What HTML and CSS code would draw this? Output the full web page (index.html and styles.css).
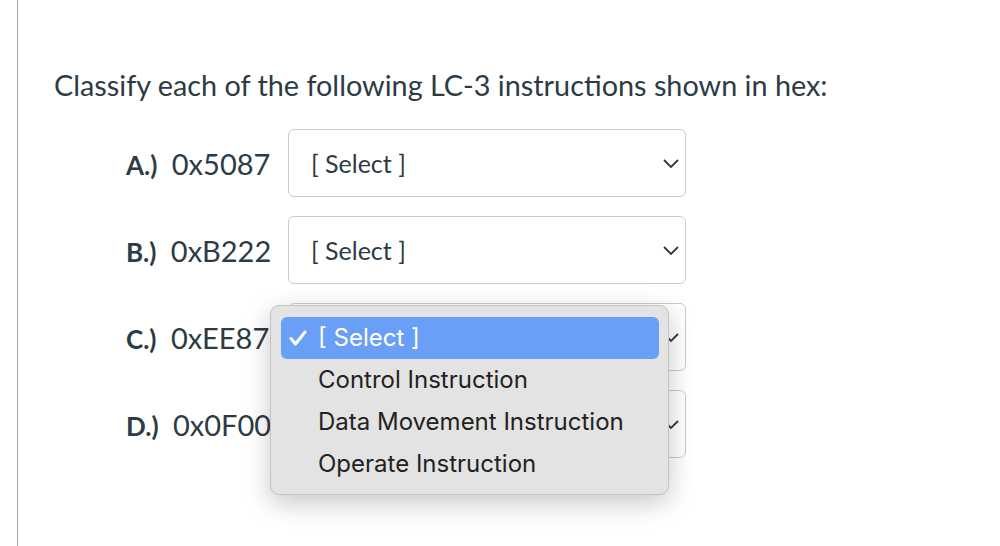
FILE: index.html
```html
<!DOCTYPE html>
<html lang="en">
<head>
  <meta charset="UTF-8">
  <title>Quiz Question</title>
  <link rel="stylesheet" href="styles.css">
</head>
<body>
  <div class="question">
    <p class="question-text">Classify each of the following LC-3 instructions shown in hex:</p>

    <div class="answers">
      <div class="answer-row">
        <span class="answer-label"><b>A.)</b> 0x5087</span>
        <div class="select-box"><span>[ Select ]</span><svg class="chevron" viewBox="0 0 16 9"><path d="M1 1l7 7 7-7"/></svg></div>
      </div>
      <div class="answer-row">
        <span class="answer-label"><b>B.)</b> 0xB222</span>
        <div class="select-box"><span>[ Select ]</span><svg class="chevron" viewBox="0 0 16 9"><path d="M1 1l7 7 7-7"/></svg></div>
      </div>
      <div class="answer-row">
        <span class="answer-label"><b>C.)</b> 0xEE87</span>
        <div class="select-box open"><span>[ Select ]</span><svg class="chevron" viewBox="0 0 16 9"><path d="M1 1l7 7 7-7"/></svg></div>
      </div>
      <div class="answer-row">
        <span class="answer-label"><b>D.)</b> 0x0F00</span>
        <div class="select-box open"><span>[ Select ]</span><svg class="chevron" viewBox="0 0 16 9"><path d="M1 1l7 7 7-7"/></svg></div>
      </div>
    </div>

    <!-- Open native dropdown for C -->
    <ul class="dropdown-menu">
      <li class="selected"><svg class="check" viewBox="0 0 18 16"><path d="M2 8.5l4.5 5.5L16 2"/></svg>[ Select ]</li>
      <li>Control Instruction</li>
      <li>Data Movement Instruction</li>
      <li>Operate Instruction</li>
    </ul>
  </div>
</body>
</html>
```

FILE: styles.css
```css
body {
  margin: 0;
  background: #fff;
  font-family: Lato, "Noto Sans", sans-serif;
  color: #2d3b45;
}

.question {
  position: relative;
  margin-left: 17px;
  height: 546px;
  border-left: 1px solid #a5a5a5;
  padding: 0 0 0 36px;
}

.question-text {
  margin: 0;
  padding-top: 67px;
  font-size: 28.8px;
  line-height: 36px;
}

.answers {
  display: flex;
  flex-direction: column;
  gap: 19px;
  margin-top: 26px;
  padding-left: 72px;
}

.answer-row {
  display: flex;
  align-items: center;
}

.answer-label {
  width: 162px;
  font-size: 29px;
  white-space: nowrap;
}

.answer-label b {
  font-size: 26px;
  margin-right: 7px;
}

.select-box {
  display: flex;
  align-items: center;
  justify-content: space-between;
  width: 368px;
  height: 66px;
  padding: 0 6px 0 22px;
  border: 1px solid #c7cdd1;
  border-radius: 6px;
  font-size: 25px;
  box-sizing: content-box;
}

.select-box.open span {
  visibility: hidden;
}

.chevron {
  width: 16px;
  height: 9px;
  fill: none;
  stroke: #2d3b45;
  stroke-width: 1.8;
}

/* macOS style popup list */
.dropdown-menu {
  position: absolute;
  left: 252px;
  top: 305px;
  width: 378px;
  margin: 0;
  padding: 11px 9px 9px 10px;
  list-style: none;
  background: #e3e3e3;
  border: 1px solid #c4c4c4;
  border-radius: 9px;
  box-shadow: 0 8px 26px rgba(0, 0, 0, 0.22);
  font-family: Inter, "Noto Sans", sans-serif;
  font-size: 24px;
  color: #222;
}

.dropdown-menu li {
  height: 42px;
  line-height: 42px;
  padding-left: 37px;
  position: relative;
}

.dropdown-menu li.selected {
  background: #6a9ff7;
  color: #fff;
  border-radius: 6px;
}

.check {
  position: absolute;
  left: 8px;
  top: 13px;
  width: 18px;
  height: 16px;
  fill: none;
  stroke: #fff;
  stroke-width: 3;
  stroke-linecap: round;
  stroke-linejoin: round;
}
```
